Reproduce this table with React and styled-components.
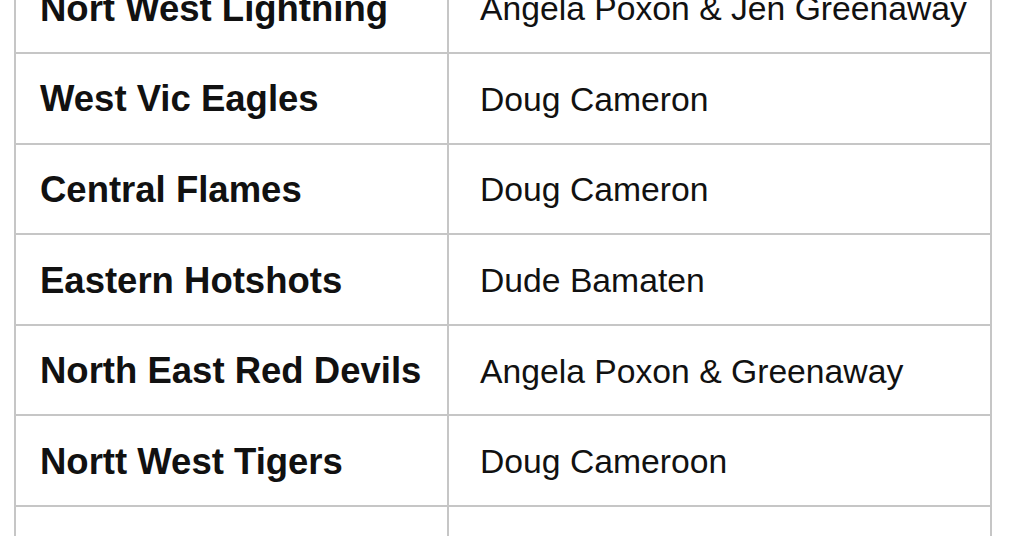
import React from "react";
import styled, { createGlobalStyle } from "styled-components";

const GlobalStyle = createGlobalStyle`
  html, body {
    margin: 0;
    padding: 0;
    background: #fff;
    overflow: hidden;
  }
  body {
    font-family: "Liberation Sans", Arial, Helvetica, sans-serif;
    color: #111;
  }
`;

const rows = [
  { team: "Nort West Lightning", coach: "Angela Poxon & Jen Greenaway" },
  { team: "West Vic Eagles", coach: "Doug Cameron" },
  { team: "Central Flames", coach: "Doug Cameron" },
  { team: "Eastern Hotshots", coach: "Dude Bamaten" },
  { team: "North East Red Devils", coach: "Angela Poxon & Greenaway" },
  { team: "Nortt West Tigers", coach: "Doug Cameroon" },
  { team: "", coach: "" },
];

const Viewport = styled.div`
  height: 536px;
  overflow: hidden;
`;

const Table = styled.div`
  margin: -36.5px 0 0 14px;
  width: 978px;
  border-left: 2px solid #c6c6c6;
  border-right: 2px solid #c6c6c6;
  box-sizing: border-box;
`;

const Row = styled.div`
  display: grid;
  grid-template-columns: 433px 1fr;
  height: 90.6px;
  border-bottom: 2px solid #c6c6c6;
  box-sizing: border-box;
`;

const Cell = styled.div`
  display: flex;
  align-items: center;
  padding-left: ${(p) => (p.$bold ? "24px" : "31px")};
  padding-top: 2px;
  font-size: ${(p) => (p.$bold ? "36.5px" : "33.7px")};
  font-weight: ${(p) => (p.$bold ? 700 : 400)};
  border-right: ${(p) => (p.$bold ? "2px solid #c6c6c6" : "none")};
  white-space: nowrap;
  color: #111;
`;

export default function App() {
  return (
    <Viewport>
      <GlobalStyle />
      <Table>
        {rows.map((r, i) => (
          <Row key={i}>
            <Cell $bold>{r.team}</Cell>
            <Cell>{r.coach}</Cell>
          </Row>
        ))}
      </Table>
    </Viewport>
  );
}
